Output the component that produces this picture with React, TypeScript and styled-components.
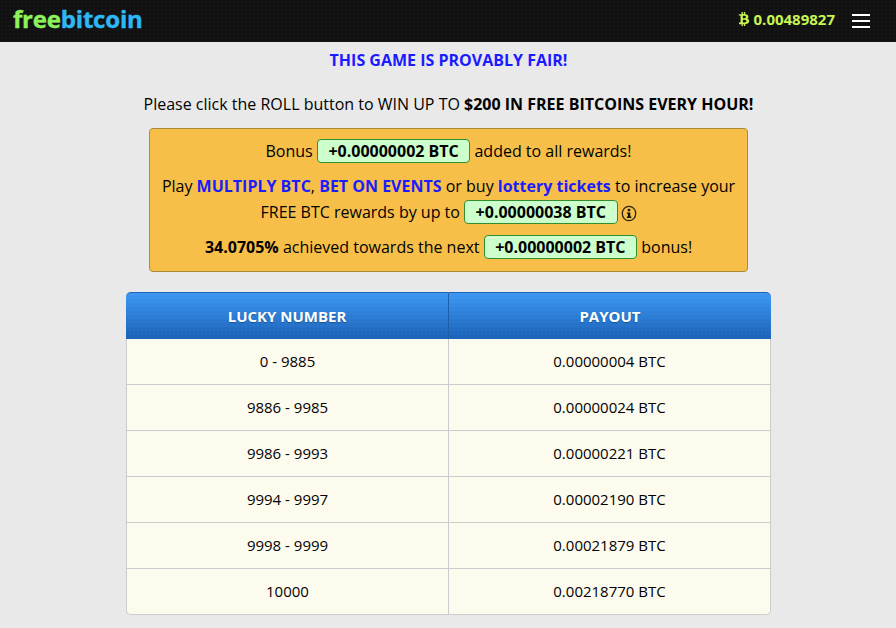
import React from 'react';
import styled, {createGlobalStyle} from 'styled-components';
import {FaBtc} from 'react-icons/fa';

const rows = [
  ['0 - 9885', '0.00000004 BTC'],
  ['9886 - 9985', '0.00000024 BTC'],
  ['9986 - 9993', '0.00000221 BTC'],
  ['9994 - 9997', '0.00002190 BTC'],
  ['9998 - 9999', '0.00021879 BTC'],
  ['10000', '0.00218770 BTC'],
];

export default function App() {
  return (
    <>
      <GlobalStyle />
      <Header>
        <Logo>
          <Free>free</Free>
          <Bit>bitcoin</Bit>
        </Logo>
        <Right>
          <Balance>
            <FaBtc size={14} />
            0.00489827
          </Balance>
          <Burger>
            <span />
            <span />
            <span />
          </Burger>
        </Right>
      </Header>
      <Main>
        <Fair>THIS GAME IS PROVABLY FAIR!</Fair>
        <Intro>
          Please click the ROLL button to WIN UP TO <b>$200 IN FREE BITCOINS EVERY HOUR!</b>
        </Intro>
        <BonusBox>
          <BonusLine>
            Bonus <Pill>+0.00000002 BTC</Pill> added to all rewards!
          </BonusLine>
          <BonusLine>
            Play <Link>MULTIPLY BTC</Link>, <Link>BET ON EVENTS</Link> or buy <Link>lottery tickets</Link> to
            increase your FREE BTC rewards by up to <Pill>+0.00000038 BTC</Pill>
            <InfoIcon viewBox="0 0 16 16">
              <ellipse cx="8" cy="8" rx="6.7" ry="7.2" fill="none" stroke="#2a2210" strokeWidth="1.3" />
              <circle cx="8" cy="4.6" r="1.4" fill="#111" />
              <path d="M5.9 6.9h3.4v4.2h1v1.4H5.9v-1.4h1V8.3h-1z" fill="#111" />
            </InfoIcon>
          </BonusLine>
          <BonusLine>
            <b>34.0705%</b> achieved towards the next <Pill>+0.00000002 BTC</Pill> bonus!
          </BonusLine>
        </BonusBox>
        <Table>
          <colgroup>
            <col width="322" />
            <col />
          </colgroup>
          <thead>
            <tr>
              <HeadCell>LUCKY NUMBER</HeadCell>
              <HeadCell>PAYOUT</HeadCell>
            </tr>
          </thead>
          <tbody>
            {rows.map(([range, payout]) => (
              <tr key={range}>
                <Cell>{range}</Cell>
                <Cell>{payout}</Cell>
              </tr>
            ))}
          </tbody>
        </Table>
      </Main>
    </>
  );
}

const GlobalStyle = createGlobalStyle`
  html, body {
    margin: 0;
    background: #e9e9e9;
    font-family: "Open Sans", "Liberation Sans", sans-serif;
    font-size: 16px;
    color: #000;
    overflow: hidden;
  }

  /* faint dotted texture that sits over the whole page */
  body::after {
    content: '';
    position: fixed;
    inset: 0;
    pointer-events: none;
    background: radial-gradient(rgba(255, 255, 255, 0.03) 0.7px, transparent 0.8px) 0 0 / 4px 4px;
  }
`;

const Header = styled.header`
  height: 42px;
  background: #111;
  display: flex;
  align-items: center;
  justify-content: space-between;
  padding: 0 26px 0 13px;
`;

const Logo = styled.div`
  font-size: 24px;
  font-weight: 700;
  letter-spacing: -0.2px;
  line-height: 1;
  margin-top: -4px;
  -webkit-text-stroke: 0.4px currentColor;
`;

const Free = styled.span`
  color: #8cf25c;
`;

const Bit = styled.span`
  color: #2bb8f5;
`;

const Right = styled.div`
  display: flex;
  align-items: center;
  gap: 17px;
`;

const Balance = styled.div`
  display: flex;
  align-items: center;
  gap: 3px;
  color: #c8f452;
  font-size: 15px;
  font-weight: 700;
  margin-top: -4px;
`;

const Burger = styled.div`
  width: 18px;
  display: flex;
  flex-direction: column;
  gap: 4px;

  span {
    display: block;
    height: 2px;
    background: #fff;
  }
`;

const Main = styled.main`
  display: flex;
  flex-direction: column;
  align-items: center;
  padding-left: 1px;
`;

const Fair = styled.div`
  color: #1a1aff;
  font-weight: 700;
  line-height: 22px;
  margin-top: 7px;
`;

const Intro = styled.div`
  line-height: 22px;
  margin-top: 22px;
`;

const BonusBox = styled.div`
  box-sizing: border-box;
  width: 599px;
  height: 144px;
  margin-top: 13px;
  padding: 9px 10px 0;
  background: #f7bf47;
  border: 1px solid #a98a35;
  border-radius: 4px;
  text-align: center;
`;

const BonusLine = styled.p`
  margin: 0 0 9px;
  line-height: 26px;
`;

const Pill = styled.span`
  display: inline-block;
  box-sizing: border-box;
  height: 24px;
  line-height: 22px;
  padding: 0 10.5px;
  background: #ccffcc;
  border: 1px solid #2f8f2f;
  border-radius: 4px;
  font-weight: 700;
`;

const Link = styled.a`
  color: #1a1aff;
  font-weight: 700;
`;

const InfoIcon = styled.svg`
  width: 16px;
  height: 17px;
  margin-left: 3px;
  vertical-align: -4px;
`;

const Table = styled.table`
  width: 645px;
  margin-top: 20px;
  border-collapse: separate;
  border-spacing: 0;
  table-layout: fixed;
  font-size: 15px;

  tbody tr:last-child td:first-child {
    border-bottom-left-radius: 5px;
  }

  tbody tr:last-child td:last-child {
    border-bottom-right-radius: 5px;
  }
`;

const HeadCell = styled.th`
  height: 47px;
  padding: 0 0 1px;
  box-sizing: border-box;
  background: linear-gradient(#3d97f3, #1a62b8);
  border-top: 1px solid #1c62b5;
  color: #fff;
  font-weight: 700;
  text-shadow: 0 1px 1px rgba(0, 0, 0, 0.3);

  &:first-child {
    border-top-left-radius: 5px;
  }

  &:last-child {
    border-top-right-radius: 5px;
    border-left: 1px solid #1c5ea8;
  }
`;

const Cell = styled.td`
  height: 46px;
  padding: 0 0 2px;
  box-sizing: border-box;
  background: #fdfbee;
  border-bottom: 1px solid #ccc;
  border-left: 1px solid #ccc;
  text-align: center;

  &:last-child {
    border-right: 1px solid #ccc;
  }
`;
